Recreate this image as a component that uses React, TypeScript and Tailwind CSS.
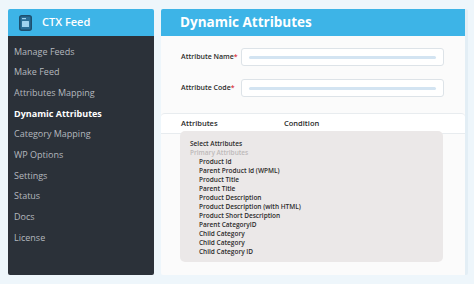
import React from "react";

const navItems = [
  "Manage Feeds",
  "Make Feed",
  "Attributes Mapping",
  "Dynamic Attributes",
  "Category Mapping",
  "WP Options",
  "Settings",
  "Status",
  "Docs",
  "License",
];

const options = [
  "Product Id",
  "Parent Product Id (WPML)",
  "Product Title",
  "Parent Title",
  "Product Description",
  "Product Description (with HTML)",
  "Product Short Description",
  "Parent CategoryID",
  "Child Category",
  "Child Category",
  "Child Category ID",
];

function FeedIcon() {
  return (
    <svg width="13" height="16" viewBox="0 0 13 16" fill="none">
      <rect x="0.75" y="0.75" width="11.5" height="14.5" rx="2" fill="#2a6f97" stroke="#1d4f6e" strokeWidth="1.5" />
      <rect x="3" y="6" width="7" height="6" rx="0.5" fill="#9fd3ef" />
      <rect x="3" y="3" width="4" height="1.2" fill="#9fd3ef" />
    </svg>
  );
}

export default function App() {
  return (
    <div
      className="w-[474px] h-[284px] bg-[#eef6fb] flex gap-[7px] pl-2 pt-[9px] overflow-hidden"
      style={{ fontFamily: "'Open Sans', 'Liberation Sans', sans-serif" }}
    >
      {/* Sidebar */}
      <aside className="w-[146px] h-[266px] flex flex-col rounded-[2px] overflow-hidden">
        <div className="h-[27px] bg-[#3db4e7] flex items-center pl-[11px] gap-[10px]">
          <FeedIcon />
          <span className="text-white text-[11px] font-semibold">CTX Feed</span>
        </div>
        <nav className="flex-1 bg-[#2b3139] pt-[5px] pl-[6px] flex flex-col">
          {navItems.map((item) => (
            <div
              key={item}
              className={`h-[20.7px] flex items-center text-[9px] ${
                item === "Dynamic Attributes" ? "text-white font-bold" : "text-[#b4b8be]"
              }`}
            >
              {item}
            </div>
          ))}
        </nav>
      </aside>

      {/* Main */}
      <main className="w-[304px] h-[266px] flex flex-col rounded-[2px] overflow-hidden border-r-[3px] border-[#e3eef5] box-content">
        <div className="h-[27px] bg-[#3db4e7] flex items-center pl-[19px]">
          <h1 className="text-white text-[13.5px] font-bold">Dynamic Attributes</h1>
        </div>
        <div className="flex-1 bg-[#fbfbfb] flex flex-col">
          <div className="flex flex-col gap-[13px] pt-[12px] pl-[20px]">
            {["Attribute Name", "Attribute Code"].map((label) => (
              <div key={label} className="flex items-center">
                <label className="w-[60px] text-[7px] font-semibold text-[#2a2a2a]">
                  {label}
                  <span className="text-[#d9363e]">*</span>
                </label>
                <div className="w-[203px] h-[18px] bg-white border border-[#dde3e8] rounded-[3px] flex items-center px-[7px]">
                  <div className="w-full h-[3px] rounded-full bg-[#d3e4f2]" />
                </div>
              </div>
            ))}
          </div>

          <div className="mt-[16px] flex-1 flex flex-col">
            <div className="h-[21px] bg-white border-t border-b border-[#e8ecef] rounded-t-[4px] flex items-center pl-[20px] text-[7.5px] font-semibold text-[#2a2a2a]">
              <span className="w-[103px]">Attributes</span>
              <span>Condition</span>
            </div>
            <div className="pl-[19px] -mt-[3px]">
              <div className="w-[263px] h-[131px] bg-[#ebe8e8] rounded-[5px] pt-[8px] pl-[10px] flex flex-col text-[6.5px] leading-[9px] font-semibold text-[#2b2b2b]">
                <span>Select Attributes</span>
                <span className="text-[#bdb9b9]">Primary Attributes</span>
                {options.map((o, i) => (
                  <span key={i} className="pl-[9px]">
                    {o}
                  </span>
                ))}
              </div>
            </div>
          </div>
        </div>
      </main>
    </div>
  );
}
